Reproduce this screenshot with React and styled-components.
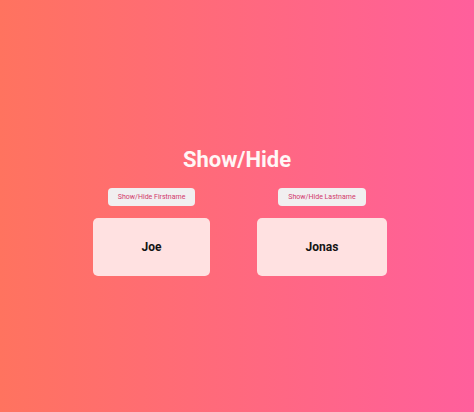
import React, { useState } from "react";
import styled, { createGlobalStyle } from "styled-components";

const GlobalStyle = createGlobalStyle`
  html, body { margin: 0; padding: 0; }
  body { font-family: Roboto, "Liberation Sans", sans-serif; }
`;

const Page = styled.div`
  min-height: 412px;
  box-sizing: border-box;
  padding-top: 147px;
  background: linear-gradient(to right, #ff735f, #ff5f9c);
  display: flex;
  flex-direction: column;
  align-items: center;
`;

const Title = styled.h1`
  margin: 0;
  font-size: 22px;
  line-height: 26px;
  font-weight: 700;
  color: #fff6f6;
`;

const Row = styled.div`
  margin-top: 15px;
  margin-left: 6px;
  display: flex;
  gap: 47px;
  align-items: flex-start;
`;

const Column = styled.div`
  display: flex;
  flex-direction: column;
  align-items: center;
  gap: 12px;
`;

const Toggle = styled.button`
  height: 18px;
  padding: 0 10px;
  border: none;
  border-radius: 4px;
  background: #f1eff0;
  color: #d2386c;
  font-family: Roboto, "Liberation Sans", sans-serif;
  font-size: 7px;
  font-weight: 400;
  cursor: pointer;
`;

const Card = styled.div`
  height: 58px;
  padding: 0 48.5px;
  box-sizing: border-box;
  display: flex;
  align-items: center;
  justify-content: center;
  border-radius: 5px;
  background: #ffe1e1;
  color: #141414;
  font-size: 12px;
  font-weight: 700;
  visibility: ${(p) => (p.$hidden ? "hidden" : "visible")};
`;

export default function App() {
  const [showFirst, setShowFirst] = useState(true);
  const [showLast, setShowLast] = useState(true);
  return (
    <>
      <GlobalStyle />
      <Page>
        <Title>Show/Hide</Title>
        <Row>
          <Column>
            <Toggle onClick={() => setShowFirst((v) => !v)}>Show/Hide Firstname</Toggle>
            <Card $hidden={!showFirst}>Joe</Card>
          </Column>
          <Column>
            <Toggle onClick={() => setShowLast((v) => !v)}>Show/Hide Lastname</Toggle>
            <Card $hidden={!showLast}>Jonas</Card>
          </Column>
        </Row>
      </Page>
    </>
  );
}
